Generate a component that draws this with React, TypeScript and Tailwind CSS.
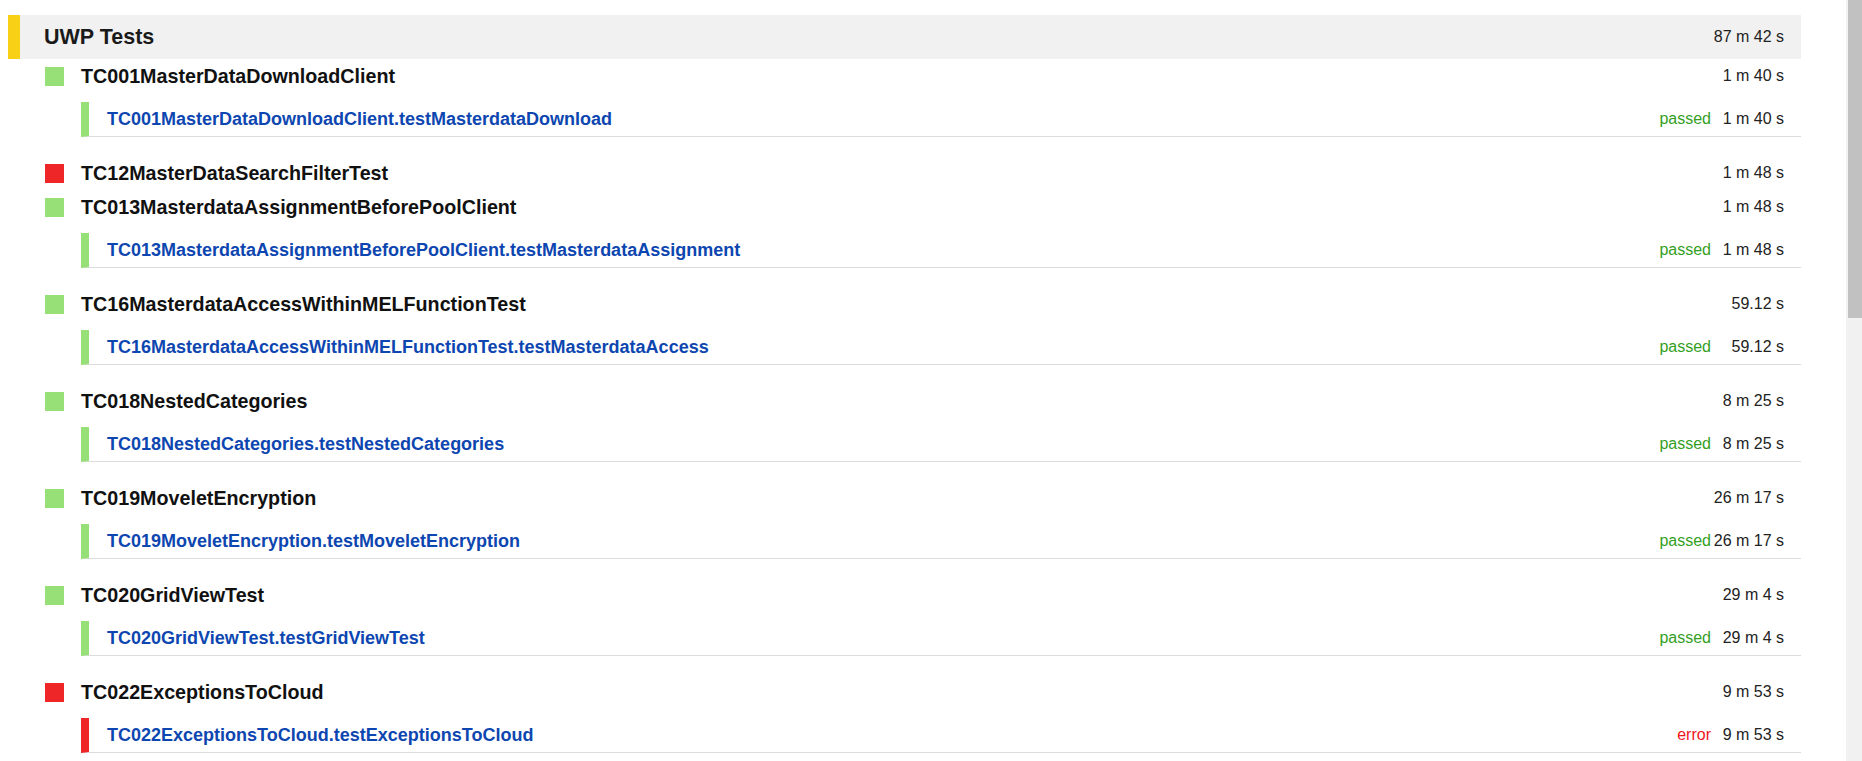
import React from "react";

type Test = { name: string; status: "passed" | "error"; duration: string };
type Suite = { name: string; ok: boolean; duration: string; tests: Test[] };

const suites: Suite[] = [
  { name: "TC001MasterDataDownloadClient", ok: true, duration: "1 m 40 s", tests: [{ name: "TC001MasterDataDownloadClient.testMasterdataDownload", status: "passed", duration: "1 m 40 s" }] },
  { name: "TC12MasterDataSearchFilterTest", ok: false, duration: "1 m 48 s", tests: [] },
  { name: "TC013MasterdataAssignmentBeforePoolClient", ok: true, duration: "1 m 48 s", tests: [{ name: "TC013MasterdataAssignmentBeforePoolClient.testMasterdataAssignment", status: "passed", duration: "1 m 48 s" }] },
  { name: "TC16MasterdataAccessWithinMELFunctionTest", ok: true, duration: "59.12 s", tests: [{ name: "TC16MasterdataAccessWithinMELFunctionTest.testMasterdataAccess", status: "passed", duration: "59.12 s" }] },
  { name: "TC018NestedCategories", ok: true, duration: "8 m 25 s", tests: [{ name: "TC018NestedCategories.testNestedCategories", status: "passed", duration: "8 m 25 s" }] },
  { name: "TC019MoveletEncryption", ok: true, duration: "26 m 17 s", tests: [{ name: "TC019MoveletEncryption.testMoveletEncryption", status: "passed", duration: "26 m 17 s" }] },
  { name: "TC020GridViewTest", ok: true, duration: "29 m 4 s", tests: [{ name: "TC020GridViewTest.testGridViewTest", status: "passed", duration: "29 m 4 s" }] },
  { name: "TC022ExceptionsToCloud", ok: false, duration: "9 m 53 s", tests: [{ name: "TC022ExceptionsToCloud.testExceptionsToCloud", status: "error", duration: "9 m 53 s" }] },
];

export default function App() {
  return (
    <div
      className="flex h-[761px] w-[1862px] overflow-hidden bg-white"
      style={{ fontFamily: '"Liberation Sans", Arial, sans-serif' }}
    >
      <div className="flex-1 pt-[15px]">
        <div className="ml-[8px] w-[1793px]">
          <div className="flex h-[44px] items-center border-l-[12px] border-[#f8d117] bg-[#f1f1f1] pl-[24px] pr-[17px]">
            <span className="flex-1 text-[21.5px] font-bold text-[#1a1a1a]">UWP Tests</span>
            <span className="text-[16px] text-[#222]">87 m 42 s</span>
          </div>
          {suites.map((s) => (
            <div key={s.name}>
              <div className="flex h-[34px] items-center pl-[37px] pr-[17px]">
                <span className={`mr-[17px] h-[19px] w-[19px] ${s.ok ? "bg-[#96e077]" : "bg-[#ee2628]"}`} />
                <span className="flex-1 pt-[1px] text-[19.7px] font-bold text-[#111]">{s.name}</span>
                <span className="text-[16px] text-[#222]">{s.duration}</span>
              </div>
              {s.tests.length > 0 && (
                <div className="pb-[19px] pl-[73px] pt-[9px]">
                  {s.tests.map((t) => (
                    <div
                      key={t.name}
                      className={`flex h-[35px] items-center border-b border-l-[8px] border-b-[#dcdcdc] pl-[18px] pr-[17px] ${
                        t.status === "passed" ? "border-l-[#96e077]" : "border-l-[#ee2628]"
                      }`}
                    >
                      <span className="flex-1 text-[18px] font-bold text-[#0d46b0]">{t.name}</span>
                      <span
                        className={`text-[16px] ${t.status === "passed" ? "text-[#33a01f]" : "text-[#f0151e]"}`}
                      >
                        {t.status}
                      </span>
                      <span className="w-[73px] text-right text-[16px] text-[#222]">{t.duration}</span>
                    </div>
                  ))}
                </div>
              )}
            </div>
          ))}
        </div>
      </div>
      <div className="flex h-full w-[16px] flex-col bg-[#f1f1f1] pl-[2px]">
        <div className="h-[318px] w-[14px] bg-[#c1c1c1]" />
      </div>
    </div>
  );
}
